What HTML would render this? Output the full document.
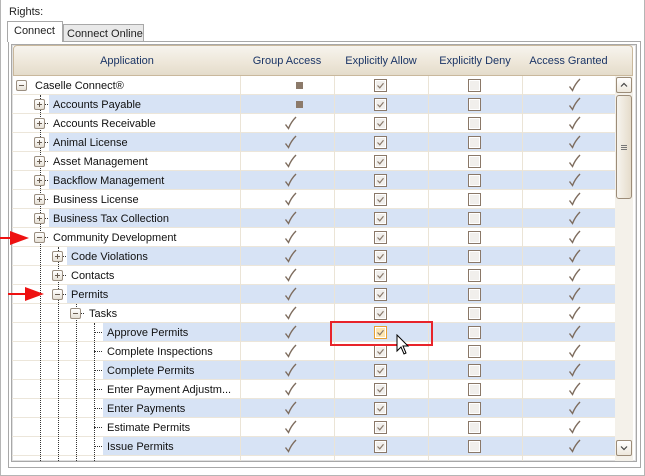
<!DOCTYPE html>
<html><head><meta charset="utf-8"><style>
*{margin:0;padding:0;box-sizing:border-box}
body{width:645px;height:476px;background:#fff;position:relative;overflow:hidden;font-family:"Liberation Sans",Tahoma,sans-serif;font-size:11px;color:#111}
.abs{position:absolute}
.hdr{position:absolute;top:45px;height:31px;background:linear-gradient(#f7f4ee,#ede6d8 60%,#e4dccb);border-right:1px solid #c9b89c;border-bottom:1px solid #c9b89c;color:#1b3566;text-align:center;line-height:30px}
.r{position:absolute;left:12px;width:603px;height:19px;border-bottom:1px solid #ece6da}
.r.b .bg{background:#d7e3f5}
.bg{position:absolute;top:0;bottom:0;right:0}
.t{position:absolute;top:4px;white-space:nowrap}
.e{position:absolute;top:4px;width:11px;height:11px;border:1px solid #9a8e80;border-radius:2px;background:linear-gradient(#fff,#e6e0d6);z-index:3}
.e::before{content:"";position:absolute;left:2px;top:4px;width:5px;height:1px;background:#6a5e52}
.e.p::after{content:"";position:absolute;left:4px;top:2px;width:1px;height:5px;background:#6a5e52}
.hd{position:absolute;top:9px;height:1px;border-top:1px dotted #333}
.sq{position:absolute;left:284px;top:6px;width:7px;height:7px;background:#8c7a6a}
.cb{position:absolute;top:3px;width:13px;height:13px;border:1px solid #8a7868;background:#f1efec;box-shadow:0 0 0 1px #fff inset}
.cb svg{position:absolute;left:1px;top:1px}
.ck{position:absolute;left:556px;top:2px}
.vl{position:absolute;width:1px;border-left:1px dotted #333;z-index:1}
.cl{position:absolute;top:76px;height:385px;width:1px;background:#ebe4d6}
</style></head><body>
<div class="abs" style="left:0;top:0;width:645px;height:476px;border:1px solid #b5b5b5;border-top:none"></div>
<div class="abs" style="left:9px;top:6px;color:#222">Rights:</div>
<div class="abs" style="left:8px;top:41px;width:633px;height:427px;border:1px solid #a8a8a8"></div>
<div class="abs" style="left:63px;top:24px;width:81px;height:18px;border:1px solid #a8a8a8;background:#e9e9e9;color:#222;padding:3px 0 0 3px">Connect Online</div>
<div class="abs" style="left:7px;top:21px;width:56px;height:21px;border:1px solid #a8a8a8;border-bottom:none;background:#fff;padding:3px 0 0 6px;color:#222">Connect</div>
<div class="abs" style="left:11px;top:44px;width:626px;height:418px;border:1px solid #a8a8a8;box-shadow:inset 0 0 0 1px #e0e0e0"></div>
<div class="hdr" style="left:13px;width:228px;border-left:1px solid #c9b89c;border-top:1px solid #c9b89c;border-radius:4px 0 0 0">Application</div>
<div class="hdr" style="left:240px;width:95px;border-top:1px solid #c9b89c">Group Access</div>
<div class="hdr" style="left:334px;width:95px;border-top:1px solid #c9b89c">Explicitly Allow</div>
<div class="hdr" style="left:428px;width:95px;border-top:1px solid #c9b89c">Explicitly Deny</div>
<div class="hdr" style="left:522px;width:94px;border-top:1px solid #c9b89c">Access Granted</div>
<div class="hdr" style="left:615px;width:18px;border-top:1px solid #c9b89c;border-radius:0 4px 0 0"></div>

<svg width="0" height="0" style="position:absolute"><defs>
<symbol id="c" viewBox="0 0 13 14"><path d="M1.5 8.5 L4.5 12.5 Q7 6 12 1" fill="none" stroke="#7d6c5e" stroke-width="1.4"/></symbol>
<symbol id="s" viewBox="0 0 9 9"><path d="M1.5 4.5 L3.8 6.8 L7.5 2.2" fill="none" stroke="#8a7a6c" stroke-width="1.2"/></symbol>
</defs></svg>

<div id="rows">
<div class="r" style="top:76px"><div class="bg" style="left:23px"></div><i class="e" style="left:4px"></i><span class="t" style="left:23px">Caselle Connect®</span></div>
<div class="r b" style="top:95px"><div class="bg" style="left:37px"></div><i class="e p" style="left:22px"></i><span class="t" style="left:41px">Accounts Payable</span></div>
<div class="r" style="top:114px"><div class="bg" style="left:37px"></div><i class="e p" style="left:22px"></i><span class="t" style="left:41px">Accounts Receivable</span></div>
<div class="r b" style="top:133px"><div class="bg" style="left:37px"></div><i class="e p" style="left:22px"></i><span class="t" style="left:41px">Animal License</span></div>
<div class="r" style="top:152px"><div class="bg" style="left:37px"></div><i class="e p" style="left:22px"></i><span class="t" style="left:41px">Asset Management</span></div>
<div class="r b" style="top:171px"><div class="bg" style="left:37px"></div><i class="e p" style="left:22px"></i><span class="t" style="left:41px">Backflow Management</span></div>
<div class="r" style="top:190px"><div class="bg" style="left:37px"></div><i class="e p" style="left:22px"></i><span class="t" style="left:41px">Business License</span></div>
<div class="r b" style="top:209px"><div class="bg" style="left:37px"></div><i class="e p" style="left:22px"></i><span class="t" style="left:41px">Business Tax Collection</span></div>
<div class="r" style="top:228px"><div class="bg" style="left:37px"></div><i class="e" style="left:22px"></i><span class="t" style="left:41px">Community Development</span></div>
<div class="r b" style="top:247px"><div class="bg" style="left:55px"></div><i class="e p" style="left:40px"></i><span class="t" style="left:59px">Code Violations</span></div>
<div class="r" style="top:266px"><div class="bg" style="left:55px"></div><i class="e p" style="left:40px"></i><span class="t" style="left:59px">Contacts</span></div>
<div class="r b" style="top:285px"><div class="bg" style="left:55px"></div><i class="e" style="left:40px"></i><span class="t" style="left:59px">Permits</span></div>
<div class="r" style="top:304px"><div class="bg" style="left:73px"></div><i class="e" style="left:58px"></i><span class="t" style="left:77px">Tasks</span></div>
<div class="r b" style="top:323px"><div class="bg" style="left:91px"></div><span class="t" style="left:95px">Approve Permits</span></div>
<div class="r" style="top:342px"><div class="bg" style="left:91px"></div><span class="t" style="left:95px">Complete Inspections</span></div>
<div class="r b" style="top:361px"><div class="bg" style="left:91px"></div><span class="t" style="left:95px">Complete Permits</span></div>
<div class="r" style="top:380px"><div class="bg" style="left:91px"></div><span class="t" style="left:95px">Enter Payment Adjustm...</span></div>
<div class="r b" style="top:399px"><div class="bg" style="left:91px"></div><span class="t" style="left:95px">Enter Payments</span></div>
<div class="r" style="top:418px"><div class="bg" style="left:91px"></div><span class="t" style="left:95px">Estimate Permits</span></div>
<div class="r b" style="top:437px"><div class="bg" style="left:91px"></div><span class="t" style="left:95px">Issue Permits</span></div>
</div>

<div class="vl" style="left:40px;top:95px;height:366px"></div>
<div class="vl" style="left:58px;top:247px;height:214px"></div>
<div class="vl" style="left:76px;top:304px;height:157px"></div>
<div class="vl" style="left:94px;top:323px;height:138px"></div>
<div class="cl" style="left:240px"></div><div class="cl" style="left:334px"></div><div class="cl" style="left:428px"></div><div class="cl" style="left:522px"></div>

<div class="abs" style="left:615px;top:76px;width:18px;height:385px;background:#f4f1ea"></div>
<div class="abs" style="left:616px;top:77px;width:16px;height:16px;border:1px solid #9c8c78;border-radius:2px;background:linear-gradient(#fff,#eee8dc)"><svg width="14" height="14" style="position:absolute;left:0;top:0"><path d="M4 8.5 L7 5.5 L10 8.5" fill="none" stroke="#444" stroke-width="1.2"/></svg></div>
<div class="abs" style="left:616px;top:95px;width:16px;height:104px;border:1px solid #9c8c78;border-radius:3px;background:linear-gradient(90deg,#f7f4ee,#e5dccb)"><div style="position:absolute;left:4px;top:49px;width:6px;height:5px;border-top:1px solid #777;border-bottom:1px solid #777"></div><div style="position:absolute;left:4px;top:51px;width:6px;height:1px;background:#777"></div></div>
<div class="abs" style="left:616px;top:440px;width:16px;height:16px;border:1px solid #9c8c78;border-radius:2px;background:linear-gradient(#fff,#eee8dc)"><svg width="14" height="14" style="position:absolute;left:0;top:0"><path d="M4 5.5 L7 8.5 L10 5.5" fill="none" stroke="#444" stroke-width="1.2"/></svg></div>

<div class="abs" style="left:330px;top:321px;width:103px;height:25px;border:2px solid #e8242a;z-index:5"></div>
<svg class="abs" style="left:0;top:228px;z-index:5" width="50" height="76">
<path d="M0 10 H14" stroke="#ee1111" stroke-width="2"/><path d="M10 3 L29 10 L10 17 Z" fill="#ee1111"/>
<path d="M8 66 H28" stroke="#ee1111" stroke-width="2"/><path d="M25 59 L44 66 L25 73 Z" fill="#ee1111"/>
</svg>
<svg class="abs" style="left:396px;top:334px;z-index:6" width="16" height="24"><path d="M1 1 L1 17 L5 13 L8 20 L10 19 L7 12 L12 12 Z" fill="#fff" stroke="#000" stroke-width="1"/></svg>

<script>
var rows=document.querySelectorAll('#rows .r');
rows.forEach(function(r,i){
 var lvl=[0,1,1,1,1,1,1,1,1,2,2,2,3,4,4,4,4,4,4,4][i];
 var h='';
 if(i<2)h+='<i class="sq"></i>';else h+='<svg class="ck" style="left:272px" width="13" height="14"><use href="#c"/></svg>';
 h+='<div class="cb" style="left:362px'+(i==13?';border-color:#e8a030;background:#fde6b0':'')+'"><svg width="9" height="9"><use href="#s"/></svg></div>';
 h+='<div class="cb" style="left:456px"></div>';
 h+='<svg class="ck" width="13" height="14"><use href="#c"/></svg>';
 if(lvl>0){var x=[0,33,51,69,82][lvl];h+='<i class="hd" style="left:'+x+'px;width:'+(lvl==4?8:3)+'px;z-index:2"></i>';}
 r.insertAdjacentHTML('beforeend',h);
});
</script>
</body></html>
